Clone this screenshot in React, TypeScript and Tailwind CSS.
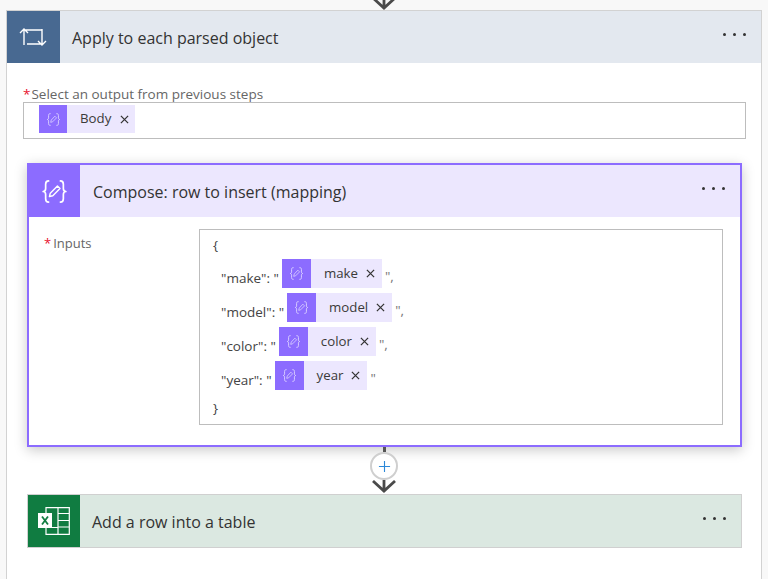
import type { ReactNode } from 'react';

function BracesIcon({ className }: { className: string }) {
  return (
    <svg viewBox="0 0 32 32" fill="none" stroke="currentColor" strokeLinecap="round" strokeLinejoin="round" className={className}>
      <path d="M9 3.500c-3 0-3.500 1.500-3.500 4v5c0 2-1 3.500-3 3.500 2 0 3 1.500 3 3.500v5c0 2.500.5 4 3.500 4" strokeWidth="2" />
      <path d="M23 3.500c3 0 3.500 1.500 3.500 4v5c0 2 1 3.500 3 3.500-2 0-3 1.500-3 3.500v5c0 2.500-.5 4-3.500 4" strokeWidth="2" />
      <path d="M19.500 9.500l3 3-8.500 8.500-4 1 1-4z" strokeWidth="1.700" />
    </svg>
  );
}

function DotsMenu() {
  return (
    <div className="flex gap-[7px]">
      <span className="w-[3px] h-[3px] rounded-full bg-[#333]" />
      <span className="w-[3px] h-[3px] rounded-full bg-[#333]" />
      <span className="w-[3px] h-[3px] rounded-full bg-[#333]" />
    </div>
  );
}

function Chip({ label }: { label: string }) {
  return (
    <span className="inline-flex items-center h-[29px] bg-[#ece7fe] text-[#3b3a39] text-[13.250px] shrink-0">
      <span className="w-[29px] h-[29px] bg-[#8c6cff] text-[#dcd2ff] flex items-center justify-center">
        <BracesIcon className="w-[15px] h-[15px]" />
      </span>
      <span className="ml-[13px]">{label}</span>
      <svg viewBox="0 0 10 10" className="w-[9px] h-[9px] ml-[8px] mr-[7px] text-[#333]" fill="none" stroke="currentColor" strokeWidth="1.400">
        <path d="M1 1l8 8M9 1l-8 8" />
      </svg>
    </span>
  );
}

function JsonRow({ name, children, suffix }: { name: string; children: ReactNode; suffix: string }) {
  return (
    <div className="flex items-start h-[34px] pl-[21px] text-[13.500px] text-[#444]">
      <span className="mt-[9px] mr-[3px] whitespace-pre">{`"${name}": "`}</span>
      {children}
      <span className="mt-[7px] ml-[3px] text-[#777]">{suffix}</span>
    </div>
  );
}

function Connector() {
  return (
    <div className="h-[47px] flex flex-col items-center">
      <div className="w-[3px] h-[5px] bg-[#555]" />
      <div className="w-[28px] h-[28px] rounded-full border-2 border-[#cfcfcf] bg-white flex items-center justify-center">
        <svg viewBox="0 0 14 14" className="w-[13px] h-[13px] text-[#2b88d8]" fill="none" stroke="currentColor" strokeWidth="1.200">
          <path d="M7 1v12M1 7h12" />
        </svg>
      </div>
      <svg viewBox="0 0 26 14" className="w-[26px] h-[14px] text-[#4a4a4a]" fill="none" stroke="currentColor" strokeWidth="2.800">
        <path d="M2 1l11 10L24 1M13 0v11" />
      </svg>
    </div>
  );
}

export default function App() {
  return (
    <div className="w-[768px] h-[579px] overflow-hidden bg-[#f8f8f8] font-['Open_Sans','Noto_Sans',sans-serif]">
      <div className="h-[10px] flex justify-center">
        <svg viewBox="0 0 26 12" className="w-[26px] h-[10px] text-[#4a4a4a]" preserveAspectRatio="xMidYMax slice" fill="none" stroke="currentColor" strokeWidth="2.800">
          <path d="M2 0l11 10L24 0M13 0v10" />
        </svg>
      </div>
      <div className="ml-[6px] w-[756px] h-[569px] bg-white border border-b-0 border-[#d2d2d2]">
        <div className="h-[52px] flex items-center bg-[#e3e8ef]">
          <div className="w-[53px] h-[52px] bg-[#486991] flex items-center justify-center">
            <svg viewBox="0 0 28 20" className="w-[28px] h-[20px] -ml-[2px] text-white" fill="none" stroke="currentColor" strokeWidth="1.400">
              <path d="M5 18V2M1 6l4-4 4 4M5 3h18M23 2v16M19 14l4 4 4-4M23 17H8" />
            </svg>
          </div>
          <div className="ml-[12px] mt-[1px] text-[16px] text-[#333]">Apply to each parsed object</div>
          <div className="ml-auto mr-[15px] -mt-[5px]"><DotsMenu /></div>
        </div>

        <div className="px-[16px] pt-[23px]">
          <div className="text-[13.500px] leading-[16px] text-[#666] flex">
            <span className="text-[#e8112d] mr-[1px]">*</span>Select an output from previous steps
          </div>
          <div className="h-[37px] w-[723px] border border-[#bdbdbd] pl-[15px] pt-[2px]">
            <span className="inline-flex items-center h-[28px] bg-[#ece7fe] text-[#3b3a39] text-[13.250px]">
              <span className="w-[28px] h-[28px] bg-[#8c6cff] text-[#dcd2ff] flex items-center justify-center">
                <BracesIcon className="w-[15px] h-[15px]" />
              </span>
              <span className="ml-[13px]">Body</span>
              <svg viewBox="0 0 10 10" className="w-[9px] h-[9px] ml-[9px] mr-[6px] text-[#333]" fill="none" stroke="currentColor" strokeWidth="1.400">
                <path d="M1 1l8 8M9 1l-8 8" />
              </svg>
            </span>
          </div>
        </div>

        <div className="mx-[20px] mt-[24px] w-[715px] h-[284px] border-2 border-[#8c6cff] bg-white shadow-[0_3px_12px_rgba(0,0,0,0.22)]">
          <div className="h-[52px] flex items-center bg-[#ece7fe]">
            <div className="w-[51px] h-[52px] bg-[#8c6cff] text-white flex items-center justify-center">
              <BracesIcon className="w-[27px] h-[27px]" />
            </div>
            <div className="ml-[13px] mt-[1px] text-[16px] text-[#333]">Compose: row to insert (mapping)</div>
            <div className="ml-auto mr-[15px] -mt-[5px]"><DotsMenu /></div>
          </div>
          <div className="flex pt-[12px]">
            <div className="w-[170px] pl-[15px] pt-[5px] text-[13px] leading-[18px] text-[#666]">
              <span className="text-[#e8112d] mr-[2px]">*</span>Inputs
            </div>
            <div className="w-[524px] h-[196px] border border-[#bdbdbd] pt-[6px] text-[13.500px] text-[#444]">
              <div className="pl-[13px] h-[23px] leading-[18px]">{'{'}</div>
              <JsonRow name="make" suffix='",'><Chip label="make" /></JsonRow>
              <JsonRow name="model" suffix='",'><Chip label="model" /></JsonRow>
              <JsonRow name="color" suffix='",'><Chip label="color" /></JsonRow>
              <JsonRow name="year" suffix='"'><Chip label="year" /></JsonRow>
              <div className="pl-[13px] mt-[4px] leading-[18px]">{'}'}</div>
            </div>
          </div>
        </div>

        <Connector />

        <div className="mx-[20px] w-[715px] h-[54px] flex items-center bg-[#dbe8e1] border border-[#d0d0d0]">
          <div className="w-[52px] h-[52px] bg-[#107c41] flex items-center justify-center">
            <svg viewBox="0 0 32 28" className="w-[32px] h-[28px]" fill="none" stroke="white" strokeWidth="1.200">
              <path d="M8 6V.7h23.300v26.600H8V21M20 .7v26.600M20 6.500h11.300M20 13.500h11.300M20 20h11.300M8 20.500h12" />
              <rect x="0" y="6" width="14" height="15" fill="white" stroke="none" />
              <path d="M4 9.500l6 8M10 9.500l-6 8" stroke="#107c41" strokeWidth="1.800" />
            </svg>
          </div>
          <div className="ml-[12px] mt-[1px] text-[16px] text-[#333]">Add a row into a table</div>
          <div className="ml-auto mr-[15px] -mt-[5px]"><DotsMenu /></div>
        </div>
      </div>
    </div>
  );
}
